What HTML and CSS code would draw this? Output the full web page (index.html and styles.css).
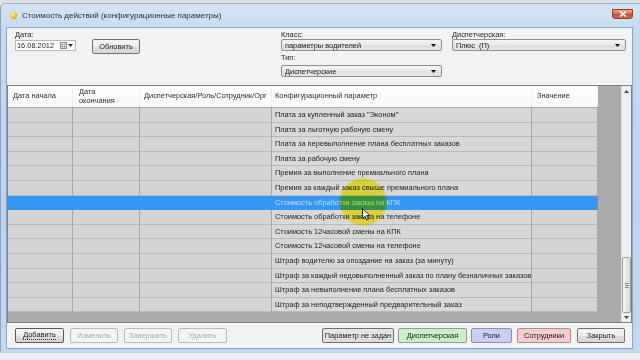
FILE: index.html
```html
<!DOCTYPE html>
<html lang="ru">
<head>
<meta charset="utf-8">
<title>Стоимость действий</title>
<link rel="stylesheet" href="styles.css">
</head>
<body>
<div class="screen">
  <div class="desk-top"></div>
  <div class="window">
    <div class="titlebar">
      <span class="app-icon"></span>
      <span class="title">Стоимость действий (конфигурационные параметры)</span>
      <span class="close"><svg width="8" height="6" viewBox="0 0 8 6"><path d="M1 0.5 L7 5.5 M7 0.5 L1 5.5" stroke="#fff" stroke-width="1.6"/></svg></span>
    </div>
    <div class="frame-body">
      <div class="client">
        <div class="filters">
          <div class="fg date-group">
            <label>Дата:</label>
            <div class="datepicker">
              <span class="dp-text">16.08.2012</span>
              <svg class="cal" width="7" height="7" viewBox="0 0 7 7"><rect x="0.5" y="0.5" width="6" height="6" fill="#e6e6e6" stroke="#8a8a8a"/><path d="M1 2.5 H6 M1 4.5 H6 M2.5 2 V6 M4.5 2 V6" stroke="#a0a0a0" stroke-width="0.6"/></svg>
              <svg class="dd" width="5" height="3" viewBox="0 0 5 3"><path d="M0 0 H5 L2.5 3 Z" fill="#333"/></svg>
            </div>
          </div>
          <button class="btn refresh">Обновить</button>
          <div class="fg class-group">
            <label>Класс:</label>
            <div class="combo"><span>параметры водителей</span><svg width="5" height="3" viewBox="0 0 5 3"><path d="M0 0 H5 L2.5 3 Z" fill="#111"/></svg></div>
            <label class="type-label">Тип:</label>
            <div class="combo combo-type"><span>Диспетчерские</span><svg width="5" height="3" viewBox="0 0 5 3"><path d="M0 0 H5 L2.5 3 Z" fill="#111"/></svg></div>
          </div>
          <div class="fg disp-group">
            <label>Диспетчерская:</label>
            <div class="combo"><span>Плюс&nbsp; (П)</span><svg width="5" height="3" viewBox="0 0 5 3"><path d="M0 0 H5 L2.5 3 Z" fill="#111"/></svg></div>
          </div>
        </div>

        <div class="grid">
          <div class="grid-body">
            <div class="ghead">
              <div class="c1">Дата начала</div>
              <div class="c2">Дата<br>окончания</div>
              <div class="c3">Диспетчерская/Роль/Сотрудник/Орг</div>
              <div class="c4">Конфигурационный параметр</div>
              <div class="c5">Значение</div>
            </div>
            <div class="row"><div></div><div></div><div></div><div class="c4">Плата за купленный заказ "Эконом"</div><div></div></div>
            <div class="row"><div></div><div></div><div></div><div class="c4">Плата за льготную рабочую смену</div><div></div></div>
            <div class="row"><div></div><div></div><div></div><div class="c4">Плата за перевыполнение плана бесплатных заказов</div><div></div></div>
            <div class="row"><div></div><div></div><div></div><div class="c4">Плата за рабочую смену</div><div></div></div>
            <div class="row"><div></div><div></div><div></div><div class="c4">Премия за выполнение премиального плана</div><div></div></div>
            <div class="row"><div></div><div></div><div></div><div class="c4">Премия за каждый заказ свыше премиального плана</div><div></div></div>
            <div class="row sel"><div></div><div></div><div></div><div class="c4">Стоимость обработки заказа на КПК</div><div></div></div>
            <div class="row"><div></div><div></div><div></div><div class="c4">Стоимость обработки заказа на телефоне</div><div></div></div>
            <div class="row"><div></div><div></div><div></div><div class="c4">Стоимость 12часовой смены на КПК</div><div></div></div>
            <div class="row"><div></div><div></div><div></div><div class="c4">Стоимость 12часовой смены на телефоне</div><div></div></div>
            <div class="row"><div></div><div></div><div></div><div class="c4">Штраф водителю за опоздание на заказ (за минуту)</div><div></div></div>
            <div class="row"><div></div><div></div><div></div><div class="c4">Штраф за каждый недовыполненный заказ по плану безналичных заказов</div><div></div></div>
            <div class="row"><div></div><div></div><div></div><div class="c4">Штраф за невыполнение плана бесплатных заказов</div><div></div></div>
            <div class="row"><div></div><div></div><div></div><div class="c4">Штраф за неподтвержденный предварительный заказ</div><div></div></div>
          </div>
          <div class="vscroll">
            <div class="sb-arrow"><svg width="5" height="3" viewBox="0 0 5 3"><path d="M0 3 H5 L2.5 0 Z" fill="#444"/></svg></div>
            <div class="sb-track"></div>
            <div class="sb-thumb"><span></span><span></span><span></span></div>
            <div class="sb-arrow sb-down"><svg width="5" height="3" viewBox="0 0 5 3"><path d="M0 0 H5 L2.5 3 Z" fill="#444"/></svg></div>
          </div>
        </div>

        <div class="actions">
          <div class="act-left">
            <button class="btn w49 focused"><span>Добавить</span></button>
            <button class="btn w48" disabled>Изменить</button>
            <button class="btn w48" disabled>Завершить</button>
            <button class="btn w49" disabled>Удалить</button>
          </div>
          <div class="act-right">
            <button class="btn b-param">Параметр не задан</button>
            <button class="btn b-disp">Диспетчерская</button>
            <button class="btn b-roles">Роли</button>
            <button class="btn b-staff">Сотрудники</button>
            <button class="btn b-close">Закрыть</button>
          </div>
        </div>
      </div>
    </div>
  </div>
  <div class="desk-bottom"></div>

  <div class="highlight"></div>
  <svg class="cursor" width="9" height="13" viewBox="0 0 9 13"><path d="M0.5 0.5 L0.5 10.5 L3 8.2 L4.9 12 L6.5 11.2 L4.7 7.6 L8 7.6 Z" fill="#fff" stroke="#000" stroke-width="0.8" stroke-linejoin="round"/></svg>
</div>
</body>
</html>
```

FILE: styles.css
```css
* { box-sizing: border-box; }
html, body { margin: 0; padding: 0; }
body {
  width: 640px;
  height: 360px;
  overflow: hidden;
  font-family: "Liberation Sans", Arial, sans-serif;
  font-size: 7.4px;
  color: #1a1a1a;
  background: #e9ebee;
}
.screen {
  position: relative;
  width: 640px;
  height: 360px;
  overflow: hidden;
  display: flex;
  flex-direction: column;
}
.desk-top { flex: none; height: 3px; background: #dfe3e8; }
.desk-bottom { flex: none; height: 8px; background: #eceef0; border-top: 1px solid #b9cde4; }

.window {
  flex: none;
  height: 349px;
  display: flex;
  flex-direction: column;
  background: linear-gradient(#d6e5f5, #c6daef 24px, #bed4ec 60%, #c4d8ee);
  border-left: 1px solid #8aa3c0;
  border-top: 1px solid #9cb3cd;
  border-radius: 5px 0 0 0;
}
.titlebar {
  flex: none;
  height: 23px;
  display: flex;
  align-items: center;
  padding-left: 9px;
}
.app-icon {
  width: 7px;
  height: 7px;
  border-radius: 50%;
  background: radial-gradient(circle at 40% 35%, #fff5a8, #f3b51e 60%, #c98a10);
  margin-right: 5px;
  flex: none;
}
.title { flex: 1; font-size: 8px; color: #1b2a44; white-space: nowrap; }
.close {
  flex: none;
  align-self: flex-start;
  margin-top: 5px;
  margin-right: 7px;
  width: 21px;
  height: 10px;
  border: 1px solid #8f4030;
  border-radius: 0 0 3px 3px;
  background: linear-gradient(#eba48e, #d9664a 50%, #c74a30 51%, #d46a4e);
  display: flex;
  align-items: center;
  justify-content: center;
}
.frame-body {
  flex: 1;
  display: flex;
  padding: 0 7px 3px 5px;
}
.client {
  flex: 1;
  display: flex;
  flex-direction: column;
  background: #f1f2f4;
  border: 1px solid #8da5c4;
}

/* filters */
.filters {
  flex: none;
  height: 57px;
  display: flex;
  align-items: flex-start;
  padding: 2px 0 0 8px;
}
.fg { display: flex; flex-direction: column; }
.fg label { display: block; height: 9px; line-height: 9px; color: #222; }
.date-group { width: 61px; }
.datepicker {
  margin-top: 1px;
  height: 11px;
  background: #fff;
  border: 1px solid #b5b9bf;
  display: flex;
  align-items: center;
  padding-left: 1px;
}
.dp-text { flex: 1; }
.cal { margin-right: 1px; }
.dd { margin-right: 2px; }
.refresh { margin-left: 16px; margin-top: 9px; width: 48px; height: 13px; }
.class-group { margin-left: 141px; width: 161px; }
.type-label { margin-top: 2px; }
.combo-type { margin-top: 3px; }
.disp-group { margin-left: 10px; width: 174px; }
.combo {
  height: 12px;
  border: 1px solid #8e8f8f;
  border-radius: 2px;
  background: linear-gradient(#f3f3f3, #ebebeb 50%, #dfdfdf 51%, #e4e4e4);
  display: flex;
  align-items: center;
  justify-content: space-between;
  padding: 0 5px 0 3px;
  white-space: nowrap;
}

/* grid */
.grid {
  flex: none;
  height: 238px;
  display: flex;
  border: 1px solid #7d828a;
}
.grid-body { flex: 1; background: #ababab; overflow: hidden; }
.ghead, .row {
  display: grid;
  grid-template-columns: 65px 67px 132px 260px 66px;
  width: 590px;
}
.ghead {
  height: 22px;
  background: linear-gradient(#ffffff, #f6f7f8);
  border-bottom: 1px solid #a9a9a9;
}
.ghead > div {
  display: flex;
  align-items: center;
  padding-left: 5px;
  color: #2e2e2e;
  line-height: 8.5px;
  white-space: nowrap;
  overflow: hidden;
  border-right: 1px solid #eeeeee;
}
.ghead .c2 { padding-left: 6px; }
.ghead .c3 { padding-left: 4px; }
.ghead .c4 { padding-left: 3px; }
.row { height: 14.6px; }
.row > div {
  background: #d4d4d4;
  border-right: 1px solid #a8a8a8;
  border-bottom: 1px solid #b9b9b9;
  line-height: 13.6px;
  white-space: nowrap;
  overflow: hidden;
  color: #1c1c1c;
}
.row .c4 { padding-left: 3px; background: #d8d8d8; }
.row.sel > div { background: #3797f5; border-color: #3797f5; color: #c3daf3; }

/* scrollbar */
.vscroll {
  flex: none;
  width: 10px;
  display: flex;
  flex-direction: column;
  background: #eff0f2;
  border-left: 1px solid #e2e3e5;
}
.sb-arrow { flex: none; height: 11px; display: flex; align-items: center; justify-content: center; }
.sb-down { height: 9px; }
.sb-track { flex: 1; }
.sb-thumb {
  flex: none;
  height: 56px;
  border: 1px solid #9c9c9c;
  border-radius: 2px;
  background: linear-gradient(90deg, #f6f6f6, #e7e7e7 50%, #d9d9d9);
  display: flex;
  flex-direction: column;
  align-items: center;
  justify-content: center;
  gap: 1px;
}
.sb-thumb span { display: block; width: 4px; height: 1px; background: #8a8a8a; }

/* actions */
.actions {
  flex: 1;
  display: flex;
  justify-content: space-between;
  align-items: flex-start;
  padding: 5px 7px 0 8px;
}
.act-left, .act-right { display: flex; }
.act-left { gap: 6px; }
.btn {
  height: 15px;
  padding: 0;
  font: inherit;
  color: #1a1a1a;
  border: 1px solid #707070;
  border-radius: 2px;
  background: linear-gradient(#f4f4f4, #ececec 50%, #dedede 51%, #d6d6d6);
  display: flex;
  align-items: center;
  justify-content: center;
  white-space: nowrap;
}
.btn:disabled { border-color: #b8bcc0; background: #f3f4f5; color: #a7a9ac; }
.w49 { width: 49px; }
.w48 { width: 48px; }
.focused { border-color: #5a5a5a; }
.focused span { border-bottom: 1px dotted #333; line-height: 8px; }
.b-param { width: 72px; background: linear-gradient(#e6e6e6, #dcdcdc); }
.b-disp { width: 69px; margin-left: 4px; background: #c9f0c9; border-color: #8da08d; }
.b-roles { width: 41px; margin-left: 4px; background: #cacdf6; border-color: #8d8fa8; }
.b-staff { width: 54px; margin-left: 5px; background: #f6cccc; border-color: #a88e8e; }
.b-close { width: 48px; margin-left: 6px; }

/* overlays */
.highlight {
  position: absolute;
  left: 338px;
  top: 177px;
  width: 50px;
  height: 50px;
  border-radius: 50%;
  background: radial-gradient(circle, rgba(255, 244, 60, 0.95) 0%, rgba(255, 244, 60, 0.9) 62%, rgba(255, 244, 60, 0) 71%);
  mix-blend-mode: multiply;
  pointer-events: none;
}
.cursor { position: absolute; left: 362px; top: 208px; }
```
